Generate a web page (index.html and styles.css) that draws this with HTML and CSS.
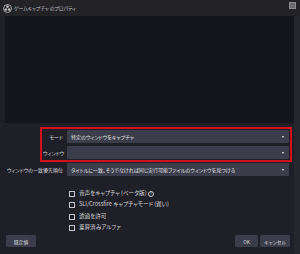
FILE: index.html
```html
<!DOCTYPE html>
<html lang="ja">
<head>
<meta charset="utf-8">
<link rel="stylesheet" href="styles.css">
</head>
<body>
<div class="window">
  <div class="titlebar">
    <svg class="logo" width="9" height="9" viewBox="0 0 18 18">
      <circle cx="9" cy="9" r="8" fill="#2b2b2f" stroke="#bdbdbd" stroke-width="1.6"/>
      <circle cx="9" cy="5.2" r="2.6" fill="#bdbdbd"/>
      <circle cx="5.6" cy="11" r="2.6" fill="#bdbdbd"/>
      <circle cx="12.4" cy="11" r="2.6" fill="#bdbdbd"/>
    </svg>
    <span class="title">ゲームキャプチャ のプロパティ</span>
    <span class="close"></span>
  </div>
  <div class="body">
    <div class="preview"></div>
    <div class="form">
      <div class="highlight">
        <div class="row">
          <div class="label short">モード</div>
          <div class="select"><span>特定のウィンドウをキャプチャ</span><i class="arrow"></i></div>
        </div>
        <div class="row">
          <div class="label short">ウィンドウ</div>
          <div class="select"><span></span><i class="arrow"></i></div>
        </div>
      </div>
      <div class="row row3">
        <div class="label">ウィンドウの一致優先順位</div>
        <div class="select"><span>タイトルに一致、そうでなければ同じ実行可能ファイルのウィンドウを見つける</span><i class="arrow"></i></div>
      </div>
      <div class="checks">
        <div class="check"><i class="box"></i><span>音声をキャプチャ (ベータ版)</span><i class="info">?</i></div>
        <div class="check"><i class="box"></i><span>SLI/Crossfire キャプチャモード (遅い)</span></div>
        <div class="check"><i class="box"></i><span>透過を許可</span></div>
        <div class="check"><i class="box"></i><span>乗算済みアルファ</span></div>
      </div>
    </div>
    <div class="footer">
      <div class="btn wide">既定値</div>
      <div class="spacer"></div>
      <div class="btn ok">OK</div>
      <div class="btn wide">キャンセル</div>
    </div>
  </div>
</div>
</body>
</html>
```
FILE: styles.css
```css
html, body {
  margin: 0;
  padding: 0;
  background: #1e1f27;
}
body {
  font-family: "Noto Sans CJK JP", "Noto Sans", sans-serif;
  font-feature-settings: "palt";
  color: #d6d6d8;
}
.window {
  width: 300px;
  height: 254px;
  display: flex;
  flex-direction: column;
  overflow: hidden;
}
.titlebar {
  height: 16px;
  flex: none;
  background: #232326;
  display: flex;
  align-items: center;
  padding: 0 4px 0 3px;
  box-sizing: border-box;
}
.logo {
  display: block;
  flex: none;
}
.title {
  font-size: 4.8px;
  color: #c4c4c6;
  margin-left: 2px;
  line-height: 1;
}
.close {
  margin-left: auto;
  width: 5px;
  height: 5px;
  background: #6a6a6e;
  border: 1px solid #8a8a8e;
  margin-top: -6px;
}
.body {
  flex: 1;
  display: flex;
  flex-direction: column;
  background: linear-gradient(to right, #1e1f27 0, #1e1f27 294px, #25262e 294px);
}
.preview {
  height: 107px;
  margin: 0 6px 0 5px;
  background: #14151c;
  flex: none;
}
.form {
  padding: 0 11px 0 4px;
  font-size: 5px;
  line-height: 1;
}
.highlight {
  margin: 4px -3px 0 36px;
  border: 2px solid #d3101c;
  padding: 1px;
  display: flex;
  flex-direction: column;
  gap: 3px;
}
.row {
  display: flex;
  align-items: center;
  gap: 4px;
  height: 13px;
}
.label {
  width: 59px;
  flex: none;
  text-align: right;
  white-space: nowrap;
  color: #d8d8da;
}
.label.short {
  width: 20px;
}
.row3 {
  margin-top: 1px;
}
.select {
  flex: 1;
  height: 13px;
  background: #3b3d4b;
  border-radius: 1px;
  display: flex;
  align-items: center;
  padding: 0 5px 0 4px;
  box-sizing: border-box;
  color: #e2e2e4;
  white-space: nowrap;
  overflow: hidden;
}
.select span {
  flex: 1;
}
.arrow {
  width: 0;
  height: 0;
  border-left: 1.6px solid transparent;
  border-right: 1.6px solid transparent;
  border-top: 2px solid #f0f0f0;
}
.checks {
  margin-top: 12px;
  padding-left: 65px;
  font-size: 5.6px;
}
.check {
  height: 11.5px;
  display: flex;
  align-items: center;
  white-space: nowrap;
}
.box {
  width: 4.4px;
  height: 4.4px;
  border: 0.8px solid #c8c8cc;
  border-radius: 0.5px;
  margin-right: 3.5px;
  flex: none;
}
.info {
  font-style: normal;
  width: 4.4px;
  height: 4.4px;
  border: 0.7px solid #cfcfd2;
  border-radius: 50%;
  font-size: 3.6px;
  line-height: 4.4px;
  text-align: center;
  margin-left: 1px;
}
.footer {
  margin-top: auto;
  display: flex;
  gap: 2px;
  padding: 0 10px 7px 6px;
}
.spacer {
  flex: 1;
}
.btn {
  height: 12px;
  background: #3b3d4b;
  border-radius: 1.5px;
  font-size: 4.8px;
  color: #dcdcde;
  display: flex;
  align-items: center;
  justify-content: center;
}
.btn.wide {
  width: 30px;
}
.btn.ok {
  width: 23px;
}
```
